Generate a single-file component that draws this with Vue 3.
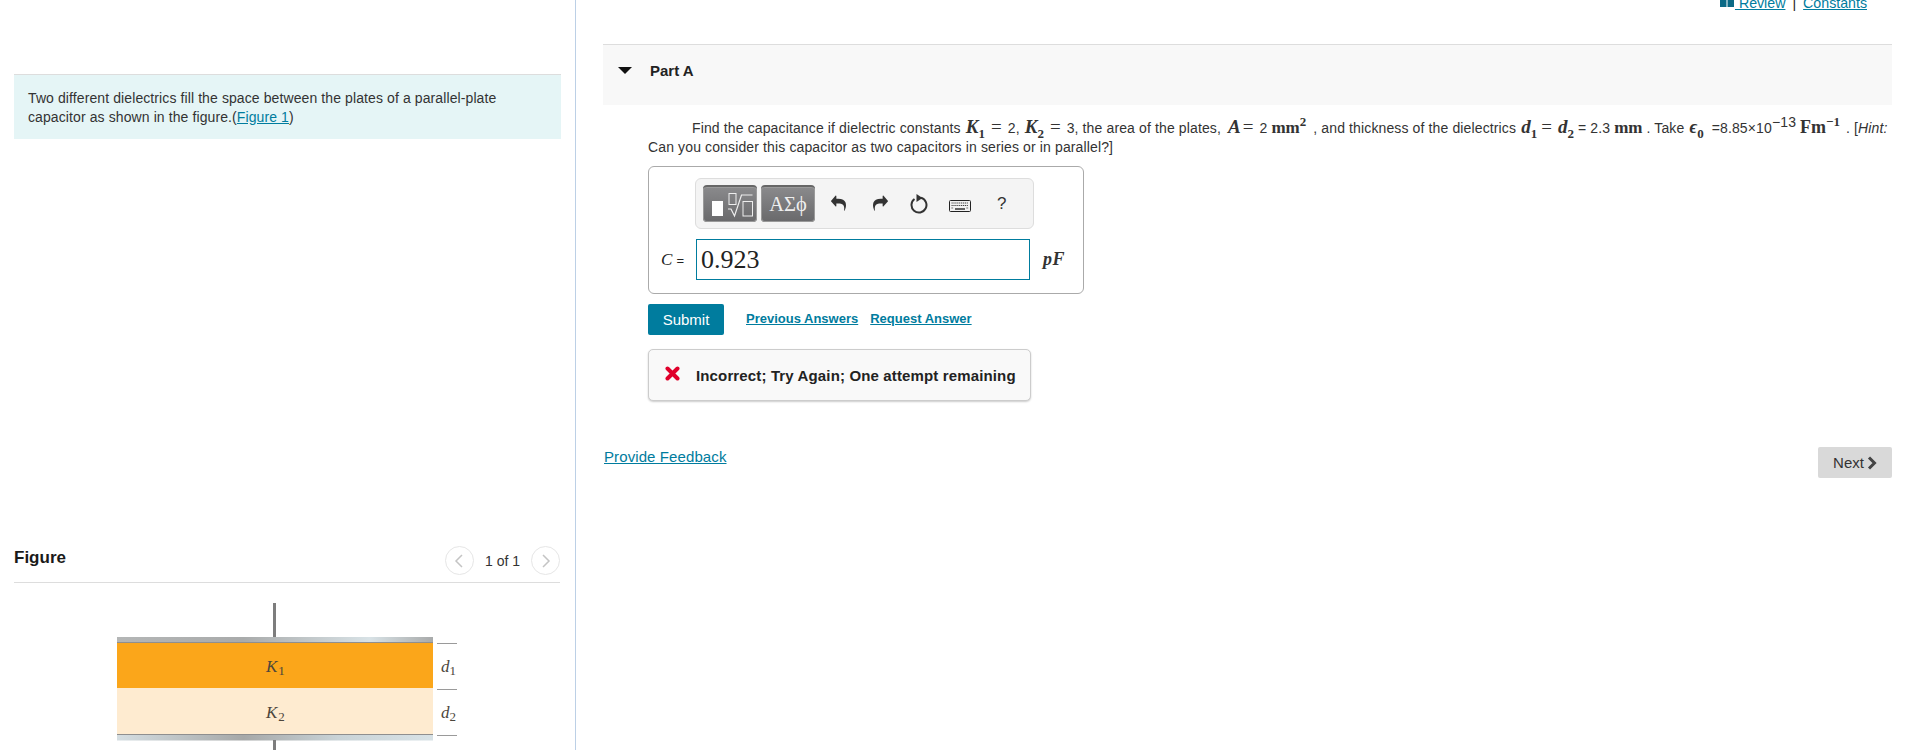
<script setup>
const undoPath = 'M1792 1120q0 166-127 451-3 7-10.5 24t-13.5 30-13 22q-12 17-28 17-15 0-23.5-10t-8.5-25q0-9 2.5-26.5t2.5-23.5q5-68 5-123 0-101-17.5-181t-48.5-138.5-80-101-105.5-69.5-133-42.5-154-21.5-175.5-6h-224v256q0 26-19 45t-45 19-45-19l-512-512q-19-19-19-45t19-45l512-512q19-19 45-19t45 19 19 45v256h224q713 0 875 403 53 134 53 333z'
</script>

<template>
  <div class="page">
    <!-- left: intro and figure -->
    <aside class="left">
      <div class="intro">
        Two different dielectrics fill the space between the plates of a parallel-plate<br />
        capacitor as shown in the figure.(<a href="#">Figure 1</a>)
      </div>

      <section class="figure">
        <header class="figure-head">
          <h2>Figure</h2>
          <div class="pager">
            <span class="round">
              <svg width="10" height="14" viewBox="0 0 10 14"><path d="M8 1 2 7l6 6" /></svg>
            </span>
            <span class="count">1 of 1</span>
            <span class="round">
              <svg width="10" height="14" viewBox="0 0 10 14"><path d="M2 1l6 6-6 6" /></svg>
            </span>
          </div>
        </header>
        <svg class="diagram" width="560" height="167" viewBox="0 0 560 167">
          <defs>
            <linearGradient id="metal" x1="0" y1="0" x2="1" y2="0">
              <stop offset="0" stop-color="#b4b6b6" />
              <stop offset="0.4" stop-color="#a9abab" />
              <stop offset="0.8" stop-color="#d8e2e6" />
              <stop offset="1" stop-color="#a8aaaa" />
            </linearGradient>
            <linearGradient id="metal2" x1="0" y1="0" x2="1" y2="0">
              <stop offset="0" stop-color="#d5dee2" />
              <stop offset="0.4" stop-color="#a6a8a8" />
              <stop offset="0.7" stop-color="#c9d3d7" />
              <stop offset="1" stop-color="#d8e2e6" />
            </linearGradient>
          </defs>
          <rect x="259" y="20" width="3" height="35" fill="#7d7d7d" />
          <rect x="103" y="54" width="316" height="6" fill="url(#metal)" />
          <rect x="103" y="59" width="316" height="1" fill="#8f8f8f" />
          <rect x="103" y="60" width="316" height="45" fill="#fba61a" />
          <rect x="103" y="105" width="316" height="46" fill="#feebd0" />
          <rect x="103" y="151" width="316" height="1.500" fill="#8f8f8f" />
          <rect x="103" y="152" width="316" height="5.500" fill="url(#metal2)" />
          <rect x="259" y="157" width="3" height="10" fill="#7d7d7d" />
          <path d="M423 60.500h20M423 106.500h20M423 152.500h20" stroke="#9a9a9a" fill="none" />
          <text x="252" y="89" class="var">K<tspan class="idx" dx="1" dy="3">1</tspan></text>
          <text x="252" y="135" class="var">K<tspan class="idx" dx="1" dy="3">2</tspan></text>
          <text x="427" y="89" class="var">d<tspan class="idx" dx="0" dy="3">1</tspan></text>
          <text x="427" y="135" class="var">d<tspan class="idx" dx="0" dy="3">2</tspan></text>
        </svg>
      </section>
    </aside>

    <!-- right: the question -->
    <main class="right">
      <div class="toplinks">
        <svg width="14" height="12" viewBox="0 0 14 12"><path d="M0 0h6.500v12H0zM7.500 0H14v12H7.500z" fill="#0b6a86" /></svg>
        <a href="#" class="review">&nbsp;Review</a>
        <span class="bar">|</span>
        <a href="#">Constants</a>
      </div>

      <div class="part-head">
        <span class="caret"></span>
        <span>Part A</span>
      </div>

      <div class="part-body">
        <p class="problem">
          <span class="line first">Find the capacitance if dielectric constants <b class="v">K<sub>1</sub></b> <span class="rel">=</span> 2, <b class="v">K<sub>2</sub></b> <span class="rel">=</span> 3, the area of the plates, <b class="v area">A</b><span class="rel">=</span> 2 <b class="u mm2">mm<sup>2</sup></b> , and thickness of the dielectrics <b class="v">d<sub>1</sub></b> <span class="rel tight">=</span> <b class="v">d<sub>2</sub></b> = 2.3 <b class="u">mm</b> . Take <b class="v eps">ϵ<sub>0</sub></b> &nbsp;=8.85×10<sup class="plain">−13</sup> <b class="u fm">Fm<sup>−1</sup></b> . [<i>Hint:</i></span>
          <span class="line">Can you consider this capacitor as two capacitors in series or in parallel?]</span>
        </p>

        <div class="answer">
          <div class="toolbar">
            <button class="tool sqrt">
              <svg width="54" height="37" viewBox="0 0 54 37">
                <rect x="9" y="16" width="11" height="15" fill="#fff" />
                <rect x="26" y="8.500" width="7" height="11" fill="none" stroke="#eee" />
                <path d="M25 24l3 0 3.500 7 7-21h11" fill="none" stroke="#eee" stroke-width="1.200" />
                <rect x="40" y="16.500" width="9.500" height="14.500" fill="none" stroke="#eee" />
              </svg>
            </button>
            <button class="tool greek">ΑΣϕ</button>
            <svg class="icon" style="margin-left: 16px" width="15" height="17" viewBox="0 0 1792 1792" preserveAspectRatio="none"><path :d="undoPath" fill="#333" /></svg>
            <svg class="icon flip" style="margin-left: 27px" width="15" height="17" viewBox="0 0 1792 1792" preserveAspectRatio="none"><path :d="undoPath" fill="#333" /></svg>
            <svg class="icon" style="margin-left: 21px" width="20" height="20" viewBox="0 0 20 20">
              <path d="M12 3.800A7.500 7.500 0 1 1 5.500 5" fill="none" stroke="#333" stroke-width="2" />
              <path d="M7.500 0l6 4-6 4z" fill="#333" />
            </svg>
            <svg class="icon kb" width="22" height="12" viewBox="0 0 22 12">
              <rect x="0.500" y="0.500" width="21" height="11" rx="1" fill="#f2f2f2" stroke="#222" />
              <path d="M2.500 3h17M2.500 5.500h17M2.500 8h2M17.500 8h2" stroke="#444" stroke-width="1.200" stroke-dasharray="1.200 .7" fill="none" />
              <path d="M6 9h10" stroke="#333" stroke-width="1.500" />
            </svg>
            <span class="help">?</span>
          </div>
          <div class="input-row">
            <span class="label"><i>C</i> <span class="eq">=</span></span>
            <div class="input">0.923</div>
            <span class="unit">pF</span>
          </div>
        </div>

        <div class="actions">
          <button class="submit">Submit</button>
          <a href="#" class="act first-act">Previous Answers</a>
          <a href="#" class="act">Request Answer</a>
        </div>

        <div class="feedback">
          <svg width="15" height="15" viewBox="0 0 15 15"><path d="M2.500 2.500l10 10M12.500 2.500l-10 10" stroke="#e0002b" stroke-width="4" stroke-linecap="round" /></svg>
          <span>Incorrect; Try Again; One attempt remaining</span>
        </div>
      </div>

      <div class="foot">
        <a href="#" class="provide">Provide Feedback</a>
        <button class="next">
          Next
          <svg width="10" height="14" viewBox="0 0 10 14"><path d="M2 1.500l5.500 5.500L2 12.500" /></svg>
        </button>
      </div>
    </main>
  </div>
</template>

<style>
html, body {
  margin: 0;
  background: #fff;
}
</style>

<style scoped>
.page {
  display: flex;
  height: 750px;
  overflow: hidden;
  background: #fff;
  font-family: "Liberation Sans", Arial, sans-serif;
  font-size: 14px;
  color: #333;
}
a {
  color: #007c9e;
  text-decoration: underline;
}
button {
  font-family: inherit;
  border: none;
  padding: 0;
}

/* left pane */
.left {
  width: 575px;
  flex: none;
  border-right: 1px solid #bcd0e6;
  display: flex;
  flex-direction: column;
}
.intro {
  box-sizing: border-box;
  margin: 74px 14px 0;
  padding: 14px 14px 0;
  height: 65px;
  line-height: 19px;
  letter-spacing: 0.1px;
  background: #e5f5f6;
  border-top: 1px solid #ddd;
}
.figure {
  margin-top: 401px;
  flex: 1;
  padding: 0 0 0 14px;
  border-right: 1px solid #bcd0e6;
  margin-right: -1px;
}
.figure-head {
  display: flex;
  justify-content: space-between;
  align-items: flex-start;
  height: 42px;
  width: 546px;
  border-bottom: 1px solid #ddd;
}
.figure-head h2 {
  margin: 7px 0 0;
  font-size: 17px;
  line-height: 22px;
  font-weight: bold;
  color: #1a1a1a;
}
.pager {
  display: flex;
  align-items: center;
  margin-top: 6px;
}
.round {
  width: 27px;
  height: 27px;
  border: 1px solid #e6e6e6;
  border-radius: 50%;
  display: flex;
  align-items: center;
  justify-content: center;
}
.round path {
  fill: none;
  stroke: #c4c4c4;
  stroke-width: 1.500;
}
.count {
  margin: 0 11px;
  font-size: 14px;
}
.diagram {
  display: block;
}
.var {
  font-family: "Liberation Serif", serif;
  font-style: italic;
  font-size: 17px;
  fill: #4c463c;
}
.idx {
  font-style: normal;
  font-size: 13px;
}

/* right pane */
.right {
  flex: 1;
  min-width: 0;
  padding: 0 27px;
  position: relative;
}
.toplinks {
  height: 11px;
  margin-bottom: 33px;
  display: flex;
  justify-content: flex-end;
  align-items: flex-end;
  padding-right: 25px;
  font-size: 14.2px;
  line-height: 16px;
  white-space: nowrap;
}
.toplinks svg {
  margin: 0 1px 4px 0;
}
.bar {
  margin: 0 7px;
  color: #222;
}
.part-head {
  box-sizing: border-box;
  height: 61px;
  padding-top: 17px;
  border-top: 1px solid #ddd;
  background: #f8f8f8;
  display: flex;
  align-items: flex-start;
  font-size: 15px;
  line-height: 18px;
  font-weight: bold;
  color: #222;
}
.caret {
  width: 0;
  height: 0;
  margin: 5px 18px 0 15px;
  border-left: 7px solid transparent;
  border-right: 7px solid transparent;
  border-top: 7px solid #111;
}
.part-body {
  padding: 0 0 0 45px;
}
.problem {
  margin: 8px 0 0;
  padding: 6px 0;
  line-height: 19px;
  letter-spacing: 0.13px;
  white-space: nowrap;
  overflow: hidden;
}
.line {
  display: block;
  height: 19px;
}
.first {
  text-indent: 44px;
}
/* math runs, line-height 0 so the sub and sup don't push the line down */
.v, .u, .rel {
  font-family: "Liberation Serif", serif;
  letter-spacing: 0;
  line-height: 0;
}
.v {
  font-size: 19px;
  font-style: italic;
  margin-left: 1px;
}
.area {
  margin-left: 3px;
}
.u {
  font-size: 17px;
}
.mm2 {
  margin-right: 3px;
}
.fm {
  font-size: 18px;
  margin-right: 2px;
}
.eps {
  font-size: 18px;
}
.rel {
  font-size: 19px;
  margin: 0 2px;
}
.rel.tight {
  margin: 0 1px 0 0;
}
sub, sup {
  line-height: 0;
  font-size: 13px;
  font-style: normal;
}
sup.plain {
  font-family: "Liberation Sans", Arial, sans-serif;
  font-size: 14px;
}
.answer {
  margin-top: 3px;
  width: 434px;
  height: 126px;
  border: 1px solid #aaa;
  border-radius: 6px;
}
.toolbar {
  box-sizing: border-box;
  margin: 11px 0 0 46px;
  width: 339px;
  height: 51px;
  border: 1px solid #ddd;
  border-radius: 6px;
  background: #f4f4f4;
  display: flex;
  align-items: center;
  padding-left: 7px;
}
.tool {
  height: 37px;
  border-radius: 4px;
  color: #eee;
  background: linear-gradient(#8a8a8c, #69696b);
  border-top: 2px solid #666;
  box-sizing: border-box;
  box-shadow: 0 0 0 1px #9a9a9a inset;
}
.tool svg {
  display: block;
  margin-top: -2px;
}
.sqrt {
  width: 54px;
}
.greek {
  width: 54px;
  margin-left: 4px;
  font-family: "Liberation Serif", serif;
  font-size: 20.500px;
}
.icon {
  flex: none;
}
.flip {
  transform: scaleX(-1);
}
.kb {
  margin: 5px 0 0 20px;
}
.help {
  margin-left: 26px;
  font-size: 17px;
  color: #333;
}
.input-row {
  display: flex;
  align-items: center;
  margin-top: 10px;
}
.label {
  margin-left: 12px;
  width: 35px;
  font-family: "Liberation Serif", serif;
  font-size: 17px;
  white-space: nowrap;
  color: #222;
}
.eq {
  font-family: "Liberation Sans", Arial, sans-serif;
  font-size: 13px;
}
.input {
  width: 328px;
  height: 39px;
  line-height: 39px;
  padding-left: 4px;
  border: 1px solid #007c9e;
  font-family: "Liberation Serif", serif;
  font-size: 26px;
  color: #222;
}
.unit {
  margin-left: 13px;
  font-family: "Liberation Serif", serif;
  font-weight: bold;
  font-style: italic;
  font-size: 18px;
  letter-spacing: 0.5px;
}
.actions {
  margin-top: 10px;
  display: flex;
  align-items: flex-start;
}
.submit {
  width: 76px;
  height: 31px;
  background: #007c9e;
  color: #fff;
  font-size: 15px;
  border-radius: 2px;
}
.act {
  font-size: 13px;
  font-weight: bold;
  line-height: 16px;
  margin: 7px 0 0 12px;
}
.first-act {
  margin-left: 22px;
}
.feedback {
  box-sizing: border-box;
  margin-top: 14px;
  width: 383px;
  height: 52px;
  background: #f9f9f9;
  border: 1px solid #ccc;
  border-radius: 5px;
  box-shadow: 0 1px 2px #ccc;
  display: flex;
  align-items: center;
  font-size: 15px;
  font-weight: bold;
  color: #222;
  letter-spacing: 0.14px;
}
.feedback svg {
  margin: -3px 16px 0 16px;
}
.foot {
  position: absolute;
  left: 27px;
  right: 27px;
  top: 447px;
  display: flex;
  justify-content: space-between;
  align-items: flex-start;
}
.provide {
  margin-left: 1px;
  font-size: 15px;
  line-height: 20px;
  letter-spacing: 0.1px;
}
.next {
  width: 74px;
  height: 31px;
  background: #d9d9d9;
  border-radius: 2px;
  color: #333;
  font-size: 15px;
  display: flex;
  align-items: center;
  justify-content: center;
  gap: 3px;
}
.next path {
  fill: none;
  stroke: #444;
  stroke-width: 3;
}
</style>
